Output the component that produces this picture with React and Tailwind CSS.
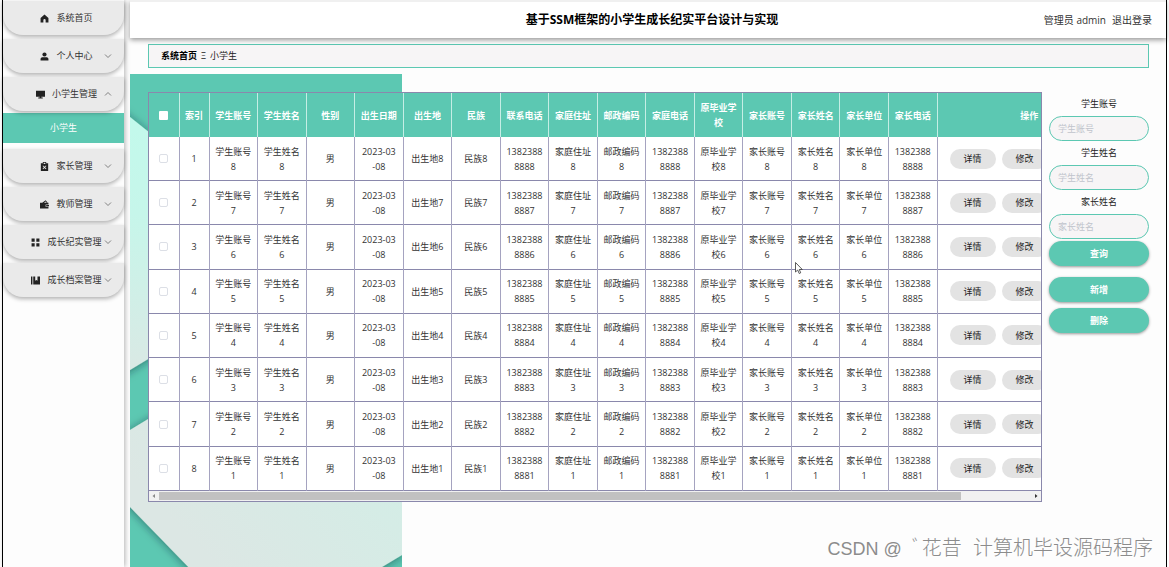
import { useState } from "react";

const menus = [
  { name: "系统首页", icon: "home" },
  { name: "个人中心", icon: "user", arrow: "down" },
  { name: "小学生管理", icon: "monitor", arrow: "up", children: ["小学生"] },
  { name: "家长管理", icon: "clipboard", arrow: "down" },
  { name: "教师管理", icon: "wallet", arrow: "down" },
  { name: "成长纪实管理", icon: "grid", arrow: "down" },
  { name: "成长档案管理", icon: "books", arrow: "down" },
];

const columns = [
  "学生账号",
  "学生姓名",
  "性别",
  "出生日期",
  "出生地",
  "民族",
  "联系电话",
  "家庭住址",
  "邮政编码",
  "家庭电话",
  "原毕业学校",
  "家长账号",
  "家长姓名",
  "家长单位",
  "家长电话",
];

const students = [8, 7, 6, 5, 4, 3, 2, 1].map((n) => [
  `学生账号${n}`,
  `学生姓名${n}`,
  "男",
  "2023-03\n-08",
  `出生地${n}`,
  `民族${n}`,
  `1382388888${n}`,
  `家庭住址${n}`,
  `邮政编码${n}`,
  `1382388888${n}`,
  `原毕业学校${n}`,
  `家长账号${n}`,
  `家长姓名${n}`,
  `家长单位${n}`,
  `1382388888${n}`,
]);

const filters = ["学生账号", "学生姓名", "家长姓名"];

const iconShapes = {
  home: <path d="M8 1 1 7v8h5v-4a2 2 0 0 1 4 0v4h5V7z" />,
  user: (
    <>
      <circle cx="8" cy="4.5" r="3.7" />
      <path d="M1 15v-2.5C1 10.5 3 9.5 5 9.5h6c2 0 4 1 4 3V15z" />
    </>
  ),
  monitor: <path d="M0 1.500h16v10.500H0zM6.500 12h3v1.500h2.500V15H4v-1.500h2.500z" />,
  clipboard: (
    <path
      fillRule="evenodd"
      d="M1.500 2H5V0h6v2h3.500v14h-13zM6.500 1.500v2h3v-2zM5.500 6 4.500 7l2.500 2.500L4.500 12l1 1L8 10.500l2.500 2.500 1-1L9 9.500 11.500 7l-1-1L8 8.500z"
    />
  ),
  wallet: (
    <path
      fillRule="evenodd"
      d="M0 5h4l6-4.500L13 4v1h2v3h-5v4h5v3H0zM7 5h4.500V4L10 2.500zM11 9h5v2h-5z"
    />
  ),
  grid: <path d="M1 1h5.500v5.500H1zM9.500 1H15v5.500H9.500zM1 9.500h5.500V15H1zM9.500 9.500H15V15H9.500z" />,
  books: <path d="M0 1h2.500v14H0zM4 1h3.500v7.500l2-1.500 2 1.500V1H16v14H4z" />,
};

function MenuIcon({ name }) {
  return (
    <svg viewBox="0 0 16 16" className="size-[9px] shrink-0 fill-[#222]">
      {iconShapes[name]}
    </svg>
  );
}

function Arrow({ dir }) {
  return (
    <svg
      viewBox="0 0 8 8"
      className="absolute right-3 size-2 fill-none stroke-[#666]"
      strokeWidth="0.8"
    >
      <path d={dir === "up" ? "M1 5.500 4 2.500l3 3" : "M1 2.500l3 3 3-3"} />
    </svg>
  );
}

function Sidebar() {
  return (
    <nav className="w-[121px] shrink-0 bg-[#fdfdfd] pt-px shadow-[1px_0_5px_rgba(0,0,0,0.3)]">
      <ul>
        {menus.map((menu) => (
          <li key={menu.name} className={menu.children ? "mb-1.5" : "mb-1"}>
            <button className="relative flex h-[34px] w-full items-center justify-center gap-[7px] rounded-b-[20px] bg-[#eaeaea] pl-1.5 text-[#333] shadow-[0_2px_4px_rgba(0,0,0,0.3)]">
              <MenuIcon name={menu.icon} />
              {menu.name}
              {menu.arrow && <Arrow dir={menu.arrow} />}
            </button>
            {menu.children?.map((child) => (
              <a
                key={child}
                href="#"
                className="mt-0.5 flex h-[30px] items-center justify-center bg-[#5cc8b2] text-white"
              >
                {child}
              </a>
            ))}
          </li>
        ))}
      </ul>
    </nav>
  );
}

function Backdrop() {
  return (
    <svg
      viewBox="0 0 272 493"
      preserveAspectRatio="xMinYMin slice"
      className="absolute top-0 left-0 h-full w-[272px]"
    >
      <defs>
        <linearGradient id="mint" x1="0" y1="0" x2="0" y2="1">
          <stop offset="0" stopColor="#c2faec" />
          <stop offset="0.4" stopColor="#c6f6ea" />
          <stop offset="1" stopColor="#dbe8e4" />
        </linearGradient>
        <linearGradient id="mist" x1="0" y1="1" x2="1" y2="0">
          <stop offset="0.2" stopColor="#dce7e4" />
          <stop offset="1" stopColor="#cdf2e8" />
        </linearGradient>
        <filter id="soft" x="-20%" y="-20%" width="140%" height="140%">
          <feDropShadow dx="0" dy="1" stdDeviation="4" floodColor="#123" floodOpacity="0.5" />
        </filter>
      </defs>
      <rect width="272" height="493" fill="#5cc8b2" />
      <path d="M-20 27 0 43l150 120v42L0 296l-20 12z" fill="url(#mint)" filter="url(#soft)" />
      <path d="M-20 368 0 356l272-165v290l-40 24H70L0 433l-20-20z" fill="url(#mist)" filter="url(#soft)" />
    </svg>
  );
}

function StudentTable() {
  const [checked, setChecked] = useState([]);

  const toggle = (i) =>
    setChecked(checked.includes(i) ? checked.filter((c) => c !== i) : [...checked, i]);

  const toggleAll = () =>
    setChecked(checked.length === students.length ? [] : students.map((_, i) => i));

  return (
    <div className="min-w-0 flex-1 border border-[#8a88ac] bg-white">
      <div className="overflow-hidden">
        <table className="h-[398px] w-full min-w-[972px] table-fixed border-collapse text-center leading-[15px]">
          <thead>
            <tr className="h-11 bg-[#5cc8b2] text-white">
              <th className="w-[30px] border-r border-[#c5eee5]">
                <input
                  type="checkbox"
                  aria-label="全选"
                  checked={checked.length === students.length}
                  onChange={toggleAll}
                  className="block mx-auto size-[9px] appearance-none rounded-[1px] bg-white checked:bg-[#409eff]"
                />
              </th>
              <th className="w-[30px] border-r border-[#c5eee5]">索引</th>
              {columns.map((col) => (
                <th key={col} className="border-r border-[#c5eee5] px-[5px] break-all">
                  {col}
                </th>
              ))}
              <th className="w-[184px]">操作</th>
            </tr>
          </thead>
          <tbody className="text-[#333]">
            {students.map((row, i) => (
              <tr key={row[0]} className="border-b border-[#8a88ac]">
                <td className="border-r border-[#a5a3c0]">
                  <input
                    type="checkbox"
                    aria-label={row[0]}
                    checked={checked.includes(i)}
                    onChange={() => toggle(i)}
                    className="block mx-auto size-[9px] appearance-none rounded-[2px] border border-[#dcdfe6] bg-white checked:bg-[#409eff]"
                  />
                </td>
                <td className="border-r border-[#a5a3c0]">{i + 1}</td>
                {row.map((cell, j) => (
                  <td
                    key={j}
                    className="border-r border-[#a5a3c0] px-[5px] break-all whitespace-pre-line"
                  >
                    {cell}
                  </td>
                ))}
                <td className="pl-3">
                  <div className="flex gap-1.5 text-[#222]">
                    <button className="h-5 w-[46px] rounded-full bg-[#e3e3e3]">详情</button>
                    <button className="h-5 w-[46px] rounded-full bg-[#e3e3e3]">修改</button>
                  </div>
                </td>
              </tr>
            ))}
          </tbody>
        </table>
      </div>
      <div className="flex h-[10px] items-center bg-[#f1f1f1]">
        <svg viewBox="0 0 10 10" className="size-[10px] fill-[#888]">
          <path d="M6 3v4L3.500 5z" />
        </svg>
        <div className="h-2 flex-1">
          <div className="h-full w-[92%] bg-[#c1c1c1]" />
        </div>
        <svg viewBox="0 0 10 10" className="size-[10px] fill-[#333]">
          <path d="M4 3v4l2.500-2z" />
        </svg>
      </div>
    </div>
  );
}

function SearchPanel() {
  const button =
    "h-[25px] rounded-full bg-[#5cc8b2] font-semibold text-white shadow-[0_1px_3px_rgba(0,0,0,0.4)]";

  return (
    <form className="flex w-[100px] shrink-0 flex-col" onSubmit={(e) => e.preventDefault()}>
      {filters.map((name, i) => (
        <div key={name} className="flex flex-col">
          <label
            htmlFor={`filter-${i}`}
            className="flex h-6 items-center justify-center text-[#222]"
          >
            {name}
          </label>
          <input
            id={`filter-${i}`}
            type="text"
            placeholder={name}
            className="h-[25px] w-full rounded-full border border-[#5cc8b2] bg-[#f7f5f6] px-2 outline-none placeholder:text-[#c0c4cc]"
          />
        </div>
      ))}
      <button className={`${button} mt-0.5`}>查询</button>
      <button type="button" className={`${button} mt-[11px]`}>
        新增
      </button>
      <button type="button" className={`${button} mt-1.5`}>
        删除
      </button>
    </form>
  );
}

function App() {
  return (
    <div className="relative bg-white px-0.5 font-['Open_Sans','Noto_Sans_CJK_SC',sans-serif] text-[9px]">
      <div className="flex min-h-screen gap-1.5 border-x border-black bg-[#fdfdfd]">
        <Sidebar />
        <main className="flex min-w-0 flex-1 flex-col">
          <header className="relative flex h-[38px] items-center justify-center border-t-2 border-[#f0f0f0] bg-white pl-2 shadow-[0_2px_5px_rgba(0,0,0,0.4)]">
            <h1 className="text-[12px] font-bold text-black">
              基于SSM框架的小学生成长纪实平台设计与实现
            </h1>
            <div className="absolute right-[14px] flex gap-1.5 text-[10px] text-[#333]">
              <span>管理员 admin</span>
              <a href="#">退出登录</a>
            </div>
          </header>

          <div className="mt-1.5 mr-[17px] ml-[18px] flex h-6 items-center gap-1 border border-[#5cc8b2] bg-[#f7f5f6] px-3 text-[#222]">
            <a href="#" className="font-bold text-black">
              系统首页
            </a>
            <span>Ξ</span>
            <span>小学生</span>
          </div>

          <section className="relative mt-1.5 flex-1">
            <Backdrop />
            <div className="relative flex items-start gap-[7px] pt-[18px] pr-[17px] pl-[18px]">
              <StudentTable />
              <SearchPanel />
            </div>
          </section>
        </main>
      </div>

      <svg
        viewBox="0 0 8 12"
        className="absolute top-[262px] left-[795px] h-3 w-2 fill-white stroke-[#333]"
        strokeWidth="0.8"
      >
        <path d="M.5.5v9.500l2.200-2 1.500 3.500 1.500-.7L4.300 7.500h3z" />
      </svg>
      <p className="absolute right-4 bottom-1 font-['Liberation_Sans','Noto_Sans_CJK_SC',sans-serif] text-[20px] font-light whitespace-pre text-[#8c8c8c] [text-shadow:1px_1px_0_#fff]">
        <span className="text-[18px]">CSDN @{"  "}</span>ﾞ花昔{"  "}计算机毕设源码程序
      </p>
    </div>
  );
}

export default App;
